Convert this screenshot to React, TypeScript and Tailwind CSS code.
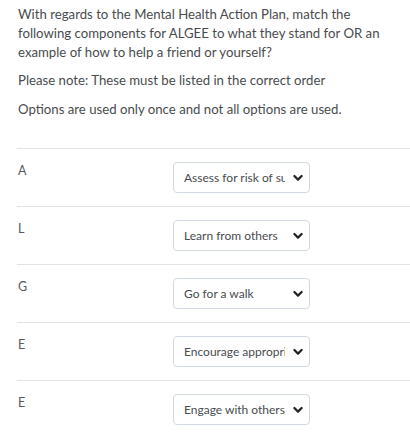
import React from 'react';

const rows = [
  { letter: "A", value: "Assess for risk of suicide or harm" },
  { letter: "L", value: "Learn from others" },
  { letter: "G", value: "Go for a walk" },
  { letter: "E", value: "Encourage appropriate professional help" },
  { letter: "E", value: "Engage with others" },
];

function Chevron() {
  return (
    <svg width="10" height="8" viewBox="0 0 10 8" className="shrink-0">
      <path d="M1.4 2 L5 5.6 L8.6 2" fill="none" stroke="#202122" strokeWidth="2.2" strokeLinecap="round" strokeLinejoin="round" />
    </svg>
  );
}

function FakeSelect({ value }: { value: string }) {
  return (
    <div className="flex items-center w-[137px] h-[31px] border border-[#d3d9e3] rounded-[4px] bg-white pl-[10px] pr-[6px]">
      <div className="flex-1 overflow-hidden whitespace-nowrap text-[12px] text-[#494c4e]">{value}</div>
      <div className="pl-[8px]"><Chevron /></div>
    </div>
  );
}

export default function App() {
  return (
    <div className="w-[410px] h-[435px] bg-white overflow-hidden text-[#494c4e]" style={{ fontFamily: "Lato, 'Open Sans', sans-serif" }}>
      <div className="pl-[18px] pr-[10px] pt-[5px] text-[13.2px] leading-[19px]">
        <p>With regards to the Mental Health Action Plan, match the following components for ALGEE to what they stand for OR an example of how to help a friend or yourself?</p>
        <p className="mt-[9px]">Please note: These must be listed in the correct order</p>
        <p className="mt-[10px]">Options are used only once and not all options are used.</p>
      </div>
      <div className="ml-[17px] mt-[29px]">
        {rows.map((r, i) => (
          <div key={i} className="flex border-t border-[#e3e3e3] pt-[13px] pb-[13px]">
            <div className="w-[156px] pl-[1px] pt-[1px] text-[12.5px] leading-[16px] text-[#565a5c]">{r.letter}</div>
            <FakeSelect value={r.value} />
          </div>
        ))}
      </div>
    </div>
  );
}
